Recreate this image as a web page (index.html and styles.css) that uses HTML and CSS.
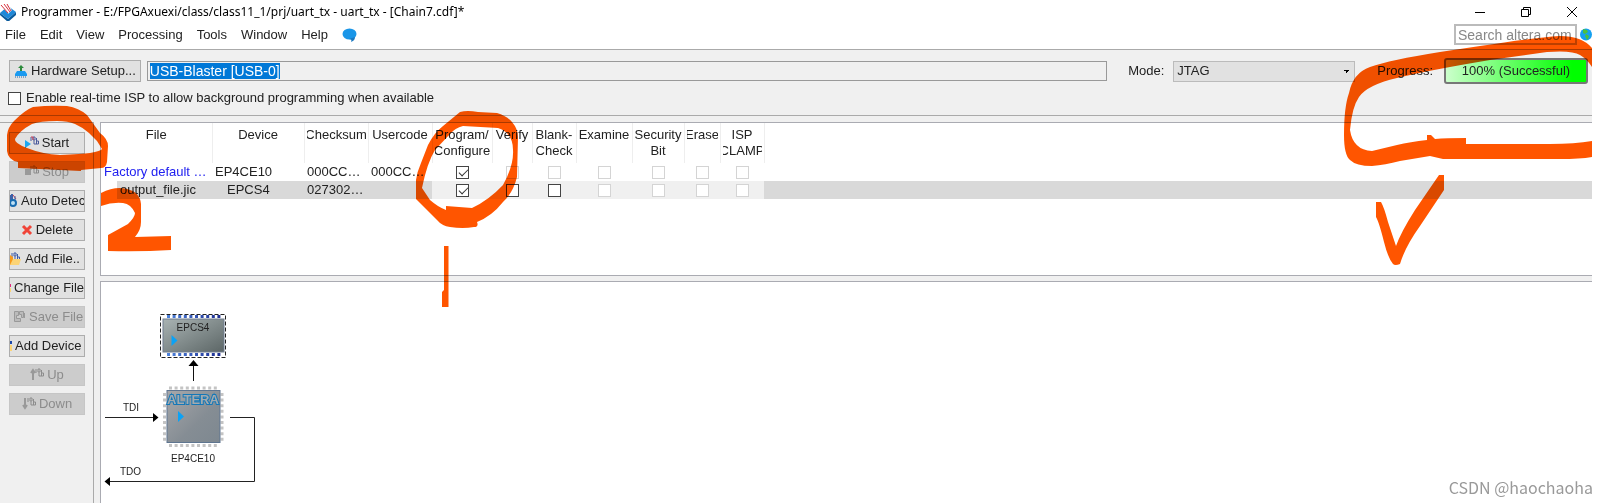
FILE: index.html
```html
<!DOCTYPE html>
<html lang="en">
<head>
    <meta charset="UTF-8">
    <meta name="viewport" content="width=device-width, initial-scale=1.0">
    <title>Programmer</title>
    <link rel="stylesheet" href="styles.css">
</head>
<body>
    <svg class="symbols" aria-hidden="true">
        <symbol id="hex" viewBox="0 0 9 9">
            <path d="M1 1v4M3 1h2v3H3zM6.500 2v6M4 4.500v3.500h4.500V5H7" fill="none" stroke="currentColor"/>
        </symbol>
    </svg>

    <div class="window">
        <div class="title-bar">
            <svg class="app-icon" width="16" height="18" viewBox="0 0 16 18">
                <path d="M0 10l8-7 8 6-8 7z" fill="#1e88d8"/>
                <path d="M0 10l8 6v3l-8-7zM16 9l-8 7v3l8-7z" fill="#0a5a9c"/>
                <path d="M1 1l8 9M4 1l6 8M7 1l4 7" stroke="#fff" stroke-width="2"/>
                <path d="M1 2l7 8M4 1l6 8M7 1l4 7" stroke="#d8303c"/>
            </svg>
            <span class="title">Programmer - E:/FPGAxuexi/class/class11_1/prj/uart_tx - uart_tx - [Chain7.cdf]*</span>
            <div class="window-buttons">
                <button aria-label="Minimize"><svg width="10" height="10" viewBox="0 0 10 10"><path d="M0 5.500h10"/></svg></button>
                <button aria-label="Restore"><svg width="10" height="10" viewBox="0 0 10 10"><path d="M.5 2.500h7v7h-7zM2.500 2.500v-2h7v7h-2"/></svg></button>
                <button aria-label="Close"><svg width="10" height="10" viewBox="0 0 10 10"><path d="M0 0l10 10M10 0L0 10"/></svg></button>
            </div>
        </div>

        <div class="menu-bar">
            <button>File</button>
            <button>Edit</button>
            <button>View</button>
            <button>Processing</button>
            <button>Tools</button>
            <button>Window</button>
            <button>Help</button>
            <button aria-label="Feedback">
                <svg width="15" height="14" viewBox="0 0 15 14"><ellipse cx="7.500" cy="6" rx="7" ry="5.500" fill="#1a96e8"/><path d="M7 11c2 0 3 1 2 3 3-1 4-3 4-5z" fill="#1a78c0"/></svg>
            </button>
            <div class="search">
                <input type="text" placeholder="Search altera.com" aria-label="Search altera.com">
                <svg width="12" height="13" viewBox="0 0 12 13"><circle cx="6" cy="6.500" r="6" fill="#14a0f0"/><path d="M3 1l4 1 1 2-3 2-2-1zM6 6l3 2-1 3-1 1-2-4z" fill="#4cc03c"/></svg>
            </div>
        </div>

        <div class="toolbar">
            <div class="toolbar-row">
                <button class="hardware">
                    <svg width="14" height="14" viewBox="0 0 14 14"><path d="M7 1l3 3H8v3H6V4H4z" fill="#2c8a3c"/><path d="M3 7h8l2 3v2H1v-2z" fill="#1a9af0"/><path d="M1 13h12" stroke="#1466b0" stroke-dasharray="1 1"/></svg>
                    Hardware Setup...
                </button>
                <input class="cable" id="cable" type="text" value="USB-Blaster [USB-0]" aria-label="Hardware" readonly>
                <label for="mode">Mode:</label>
                <select id="mode"><option>JTAG</option></select>
                <span class="progress-label" id="progress-label">Progress:</span>
                <div class="progress" role="progressbar" aria-valuenow="100" aria-labelledby="progress-label">100% (Successful)</div>
            </div>
            <div class="isp-row">
                <input type="checkbox" id="isp">
                <label for="isp">Enable real-time ISP to allow background programming when available</label>
            </div>
        </div>

        <div class="main">
            <div class="sidebar">
                <button>
                    <svg width="14" height="14" viewBox="0 0 14 14"><path d="M0 4l6 4-6 4z" fill="#1aa8f4"/><use href="#hex" x="5" y="0" width="9" height="9" color="#4a5a9c"/><path d="M6 1h2v3" stroke="#c83c50" fill="none"/></svg>
                    Start
                </button>
                <button disabled>
                    <svg width="14" height="14" viewBox="0 0 14 14"><path d="M0 4h6v6H0z" fill="#999"/><use href="#hex" x="5" y="0" width="9" height="9"/></svg>
                    Stop
                </button>
                <button class="clipped">
                    <svg width="8" height="14" viewBox="0 0 8 14"><path d="M0 1v8M2 0v6" stroke="#3c62a8" stroke-width="2"/><path d="M3 1l3 4" stroke="#c83c50"/><path d="M5 2v4" stroke="#3c62a8"/><circle cx="3" cy="9" r="3" fill="#bfe2f6" stroke="#1a6cb0" stroke-width="2"/></svg>
                    Auto Detect
                </button>
                <button>
                    <svg width="12" height="12" viewBox="0 0 12 12"><path d="M2 2l8 8M10 2l-8 8" stroke="#f04438" stroke-width="3"/></svg>
                    Delete
                </button>
                <button class="clipped folder">
                    <svg width="11" height="14" viewBox="0 0 11 14"><use href="#hex" x="1" y="0" width="9" height="9" color="#3c5aa8"/><path d="M0 3l3 2v8H0z" fill="#f79a1c"/><path d="M3 7h8l-2 6H0z" fill="#fcd476"/></svg>
                    Add File..
                </button>
                <button class="clipped">
                    <svg width="1" height="14" viewBox="0 0 1 14"><path d="M0 3h1v3H0z" fill="#e0287c"/><path d="M0 7h1v4H0z" fill="#fcd476"/></svg>
                    Change File
                </button>
                <button class="clipped save" disabled>
                    <svg width="13" height="14" viewBox="0 0 13 14"><path d="M1.500 1.500h4v4h-2v3h4v3h-6zM6.500 1.500h4v6h-2v-3h-2z" fill="#bbb" stroke="#999"/><path d="M11.500 3v5" stroke="#999"/></svg>
                    Save File
                </button>
                <button class="clipped">
                    <svg width="2" height="14" viewBox="0 0 2 14"><path d="M0 2h2v3H0z" fill="#1c48a8"/><path d="M0 6h2v6H0z" fill="#fcd476"/></svg>
                    Add Device
                </button>
                <button disabled>
                    <svg width="14" height="14" viewBox="0 0 14 14"><path d="M3 12V3M1 5l2-3 2 3" fill="none" stroke="#999" stroke-width="2"/><use href="#hex" x="5" y="0" width="9" height="9"/></svg>
                    Up
                </button>
                <button disabled>
                    <svg width="14" height="14" viewBox="0 0 14 14"><path d="M3 1v9M1 8l2 3 2-3" fill="none" stroke="#999" stroke-width="2"/><use href="#hex" x="5" y="0" width="9" height="9"/></svg>
                    Down
                </button>
            </div>

            <div class="panes">
                <div class="pane files">
                    <table>
                        <colgroup>
                            <col class="col-file"><col class="col-device"><col class="col-sum"><col class="col-sum">
                            <col class="col-program"><col class="col-verify"><col class="col-blank"><col class="col-examine">
                            <col class="col-security"><col class="col-erase"><col class="col-isp"><col>
                        </colgroup>
                        <thead>
                            <tr>
                                <th><div>File</div></th>
                                <th><div>Device</div></th>
                                <th><div>Checksum</div></th>
                                <th><div>Usercode</div></th>
                                <th><div>Program/</div><div>Configure</div></th>
                                <th><div>Verify</div></th>
                                <th><div>Blank-</div><div>Check</div></th>
                                <th><div>Examine</div></th>
                                <th><div>Security</div><div>Bit</div></th>
                                <th><div>Erase</div></th>
                                <th><div>ISP</div><div>CLAMP</div></th>
                                <th></th>
                            </tr>
                        </thead>
                        <tbody>
                            <tr>
                                <td class="factory">Factory default …</td>
                                <td>EP4CE10</td>
                                <td>000CC…</td>
                                <td>000CC…</td>
                                <td class="check"><input type="checkbox" aria-label="Program" checked></td>
                                <td class="check"><input type="checkbox" aria-label="Verify" disabled></td>
                                <td class="check"><input type="checkbox" aria-label="Blank-Check" disabled></td>
                                <td class="check"><input type="checkbox" aria-label="Examine" disabled></td>
                                <td class="check"><input type="checkbox" aria-label="Security Bit" disabled></td>
                                <td class="check"><input type="checkbox" aria-label="Erase" disabled></td>
                                <td class="check"><input type="checkbox" aria-label="ISP CLAMP" disabled></td>
                                <td></td>
                            </tr>
                            <tr class="selected">
                                <td class="child first">output_file.jic</td>
                                <td class="child">EPCS4</td>
                                <td>027302…</td>
                                <td></td>
                                <td class="check"><input type="checkbox" aria-label="Program" checked></td>
                                <td class="check"><input type="checkbox" aria-label="Verify"></td>
                                <td class="check"><input type="checkbox" aria-label="Blank-Check"></td>
                                <td class="check"><input type="checkbox" aria-label="Examine" disabled></td>
                                <td class="check"><input type="checkbox" aria-label="Security Bit" disabled></td>
                                <td class="check"><input type="checkbox" aria-label="Erase" disabled></td>
                                <td class="check"><input type="checkbox" aria-label="ISP CLAMP" disabled></td>
                                <td></td>
                            </tr>
                        </tbody>
                    </table>
                </div>

                <div class="pane chain">
                    <svg width="160" height="210" viewBox="101 282 160 210">
                        <defs>
                            <linearGradient id="flash" x1="0" y1="0" x2="1" y2="1">
                                <stop offset="0" stop-color="#a9b3b3"/><stop offset="1" stop-color="#5c6666"/>
                            </linearGradient>
                            <linearGradient id="fpga" x1="0" y1="0" x2="1" y2="1">
                                <stop offset="0" stop-color="#a8a8aa"/><stop offset=".6" stop-color="#858d94"/><stop offset="1" stop-color="#7e8890"/>
                            </linearGradient>
                            <linearGradient id="pins" x1="0" y1="0" x2="1" y2="0">
                                <stop offset="0" stop-color="#4c82dc"/><stop offset="1" stop-color="#1c2c90"/>
                            </linearGradient>
                        </defs>
                        <!-- EPCS4 flash -->
                        <rect x="160.500" y="314.500" width="65" height="43" fill="none" stroke="#222" stroke-dasharray="4 2"/>
                        <rect x="167" y="315" width="54" height="3" fill="url(#pins)"/>
                        <rect x="167" y="353" width="54" height="3" fill="url(#pins)"/>
                        <path d="M170 316.500h51M170 354.500h51" stroke="#fff" stroke-width="3" stroke-dasharray="2.600 3"/>
                        <rect x="163" y="319" width="61" height="33" fill="url(#flash)" stroke="#6f7d90"/>
                        <path d="M171.500 335v11l6-5.500z" fill="#0aa2f6"/>
                        <text x="193" y="331" text-anchor="middle">EPCS4</text>
                        <path d="M193.500 381v-16" stroke="#111"/>
                        <path d="M193.500 360l5 6h-10z"/>
                        <!-- EP4CE10 -->
                        <path d="M169 388h50M169 445.500h50M164.500 393v50M222 393v50" stroke="#c4c4c4" stroke-width="3" stroke-dasharray="3 2.600"/>
                        <rect x="167" y="390.500" width="53" height="52" fill="url(#fpga)" stroke="#5e7590"/>
                        <text class="brand" x="193" y="404" text-anchor="middle">ALTERA</text>
                        <path d="M178 411v11l6-5.500z" fill="#0aa2f6"/>
                        <text x="193" y="462" text-anchor="middle">EP4CE10</text>
                        <!-- TDI / TDO -->
                        <path d="M105 417.500h50M230 417.500h24.500v64H109" fill="none" stroke="#222"/>
                        <path d="M153 413l5.500 4.500-5.500 4.500zM110 477l-5.500 4.500 5.500 4.500z"/>
                        <text x="123" y="411">TDI</text>
                        <text x="120" y="475">TDO</text>
                    </svg>
                </div>
            </div>
        </div>
    </div>

    <!-- hand drawn marks -->
    <svg class="ink ink-left" width="530" height="320" viewBox="0 0 530 320" aria-hidden="true">
        <path d="M18 168v-6Q8 160 7 151V135Q8 127 14 121 25 110 33 107 50 105 67 106 79 108 87 115L100 133Q108 139 108 146L107 162Q106 168 101 168L81 170v1zM15 139Q14 143 27 148 42 154 60 155 82 154 90 153 101 151 102 149L97 141 89 133Q82 127 75 124 68 121 57 121 40 121 32 124 19 131 15 139z"/>
        <path d="M101 193Q115 186 127 189 140 192 141 204V222Q141 230 135 237L171 236v14Q140 252 108 251V235L128 224Q135 217 135 213 131 204 123 203 112 202 101 206z"/>
        <path d="M416 199V180Q417 172 421 163L428 145Q434 133 443 126L460 112Q467 110 478 112L497 113Q507 116 512 122 518 129 518 137L517 177Q513 193 503 202 492 216 477 222 479 227 474 227 463 229 450 227 442 226 437 220zM422 188L430 200Q438 207 446 210V206L472 208Q489 200 503 185 514 165 513 150 513 133 498 128L463 126Q455 128 450 134L435 150Q427 163 422 188z"/>
        <path d="M444 246h4.500V307H442V292L444 290z"/>
    </svg>
    <svg class="ink ink-right" width="252" height="240" viewBox="1340 30 252 240" aria-hidden="true">
        <path d="M1592 48Q1582 36 1560 36 1530 38 1480 46L1440 52Q1390 60 1370 67 1353 73 1349 93 1344 107 1344 135 1344 155 1350 160 1356 166 1372 166 1385 165 1400 161L1430 156 1443 159H1560Q1580 159 1592 157V141Q1575 144 1550 144H1466V138Q1446 138 1435 139L1431 135H1427V140Q1410 142 1397 145L1372 151Q1353 150 1350 130 1352 107 1359 97 1367 85 1397 78 1430 70 1490 60L1547 52Q1572 50 1580 55 1587 59 1592 67z"/>
        <path d="M1376 202h5Q1384 207 1388 222L1396 246Q1401 232 1415 210L1439 175h5v15L1420 226Q1405 247 1400 264 1395 266 1393 264 1388 258 1384 242 1379 222 1376 217z"/>
    </svg>
    <div class="watermark">CSDN @haochaoha</div>

    <script>
        document.getElementById('cable').focus();
        document.getElementById('cable').select();
    </script>
</body>
</html>
```

FILE: styles.css
```css
* {
    box-sizing: border-box;
}
body {
    margin: 0;
    background-color: #fff;
    color: #222;
    font-family: "Liberation Sans", Arial, sans-serif;
    font-size: 13px;
    line-height: 16px;
    position: relative;
}
button, input, select {
    font: inherit;
    color: inherit;
    margin: 0;
    padding: 0;
    outline: none;
}
.symbols {
    display: none;
}
.window {
    display: flex;
    flex-direction: column;
    min-height: 100vh;
    margin-right: 19px;
}
.title-bar {
    display: flex;
    align-items: center;
    height: 24px;
    color: #000;
}
.title {
    flex: 1;
    margin-left: 5px;
    font-family: "Noto Sans", sans-serif;
    font-size: 12px;
}
.window-buttons {
    display: flex;
    gap: 36px;
    padding-right: 15px;
}
.window-buttons button {
    display: flex;
    border: none;
    background: none;
}
.window-buttons path {
    fill: none;
    stroke: #000;
}
.menu-bar {
    display: flex;
    align-items: center;
    gap: 14px;
    height: 25px;
    padding-left: 5px;
    padding-bottom: 4px;
}
.menu-bar button {
    border: none;
    background: none;
}
.menu-bar button svg {
    display: block;
}
.search {
    display: flex;
    align-items: center;
    gap: 3px;
    margin-left: auto;
}
.search input {
    width: 123px;
    height: 21px;
    padding-left: 2px;
    border: 2px solid #bbb;
    font-size: 14px;
}
.search input::placeholder {
    color: #888;
}
.toolbar {
    padding: 8px 4px 7px 9px;
    border-top: 1px solid #aaa;
    border-bottom: 1px solid #aaa;
    background-color: #f0f0f0;
}
.toolbar-row {
    display: flex;
    align-items: center;
    height: 26px;
}
.hardware {
    display: flex;
    align-items: center;
    gap: 3px;
    height: 22px;
    padding: 0 4px;
    border: 1px solid #adadad;
    background-color: #e1e1e1;
    white-space: nowrap;
}
.cable {
    flex: 1;
    height: 20px;
    margin: 0 21px 0 6px;
    padding: 0 2px;
    border: 1px solid #999;
    background-color: #f0f0f0;
    font-size: 14px;
}
.cable::selection {
    background-color: #0078d7;
    color: #fff;
}
.toolbar select {
    width: 182px;
    height: 21px;
    margin-left: 9px;
    padding-left: 3px;
    border: 1px solid #bbb;
    border-radius: 0;
    appearance: none;
    background-color: #e1e1e1;
    background-image: linear-gradient(45deg, transparent 50%, #000 50%), linear-gradient(-45deg, transparent 50%, #000 50%);
    background-size: 3px 3px;
    background-position: right 7px top 8px, right 4px top 8px;
    background-repeat: no-repeat;
}
.progress-label {
    margin: 0 11px 0 22px;
}
.progress {
    width: 144px;
    height: 26px;
    border: 2px solid #777;
    border-radius: 3px;
    background: linear-gradient(to right, #ccffcc, #00ff00 90%);
    line-height: 22px;
    text-align: center;
}
.isp-row {
    display: flex;
    align-items: center;
    gap: 5px;
    height: 20px;
    margin-top: 4px;
}
.isp-row input {
    margin-left: -1px;
}
input[type="checkbox"] {
    display: block;
    width: 13px;
    height: 13px;
    border: 1px solid #444;
    appearance: none;
    background-color: #fff;
}
input[type="checkbox"]:disabled {
    border-color: #d4d4d4;
}
input[type="checkbox"]:checked::before {
    content: "";
    display: block;
    width: 8px;
    height: 4px;
    margin: 2px 0 0 2px;
    border-left: 1px solid #333;
    border-bottom: 1px solid #333;
    transform: rotate(-45deg);
}
.main {
    display: flex;
    flex: 1;
    gap: 6px;
    padding-top: 6px;
    background-color: #f0f0f0;
}
.sidebar {
    display: flex;
    flex-direction: column;
    gap: 7px;
    width: 94px;
    padding: 9px 8px 0 9px;
    border-top: 1px solid #aaa;
    border-right: 1px solid #aaa;
}
.sidebar button {
    display: flex;
    align-items: center;
    justify-content: center;
    gap: 3px;
    height: 22px;
    border: 1px solid #adadad;
    background-color: #e1e1e1;
    overflow: hidden;
    white-space: nowrap;
}
.sidebar button svg {
    flex: none;
}
.sidebar button:disabled {
    border-color: #c6c6c6;
    background-color: #ccc;
    color: #8c8c8c;
}
.sidebar .clipped {
    justify-content: flex-start;
}
.sidebar .folder {
    gap: 4px;
}
.sidebar .save {
    padding-left: 3px;
}
.panes {
    display: flex;
    flex: 1;
    flex-direction: column;
    gap: 5px;
    min-width: 0;
}
.pane {
    border: 1px solid #aaabb2;
    border-right: none;
    background-color: #fff;
}
.files {
    height: 154px;
}
.chain {
    flex: 1;
    border-bottom: none;
}
.chain svg {
    display: block;
}
.chain text {
    font-size: 10px;
    fill: #222;
}
.chain .brand {
    font-size: 13px;
    font-weight: bold;
    fill: #a4aaae;
    stroke: #1478b8;
    stroke-width: 2px;
    paint-order: stroke;
}
table {
    width: 100%;
    table-layout: fixed;
    border-collapse: collapse;
}
.col-file { width: 111px; }
.col-device { width: 92px; }
.col-sum { width: 64px; }
.col-program { width: 60px; }
.col-verify { width: 40px; }
.col-blank { width: 44px; }
.col-examine { width: 56px; }
.col-security { width: 52px; }
.col-erase { width: 36px; }
.col-isp { width: 44px; }
th {
    height: 40px;
    padding: 4px 2px 0;
    border-right: 1px solid #eee;
    font-weight: normal;
    vertical-align: top;
}
th:last-child {
    border: none;
}
th div {
    display: flex;
    justify-content: center;
    overflow: hidden;
}
td {
    height: 18px;
    padding: 0 3px;
    overflow: hidden;
    white-space: nowrap;
}
.factory {
    color: #2020f0;
}
.child {
    padding-left: 15px;
}
.check input {
    margin: 0 auto;
}
.selected td {
    background-color: #d9d9d9;
}
.selected .first {
    background: linear-gradient(to right, #fff 16px, #d9d9d9 16px);
    padding-left: 19px;
}
.selected .check {
    background-color: #f0f0f0;
}
.ink {
    position: absolute;
    top: 0;
    fill: #ff5500;
    mix-blend-mode: multiply;
    pointer-events: none;
}
.ink-left {
    left: 0;
}
.ink-right {
    top: 30px;
    right: 19px;
}
.watermark {
    position: absolute;
    right: 18px;
    bottom: 6px;
    color: #999;
    font-family: "Noto Sans CJK SC", sans-serif;
    font-size: 16px;
    line-height: 20px;
}
```
